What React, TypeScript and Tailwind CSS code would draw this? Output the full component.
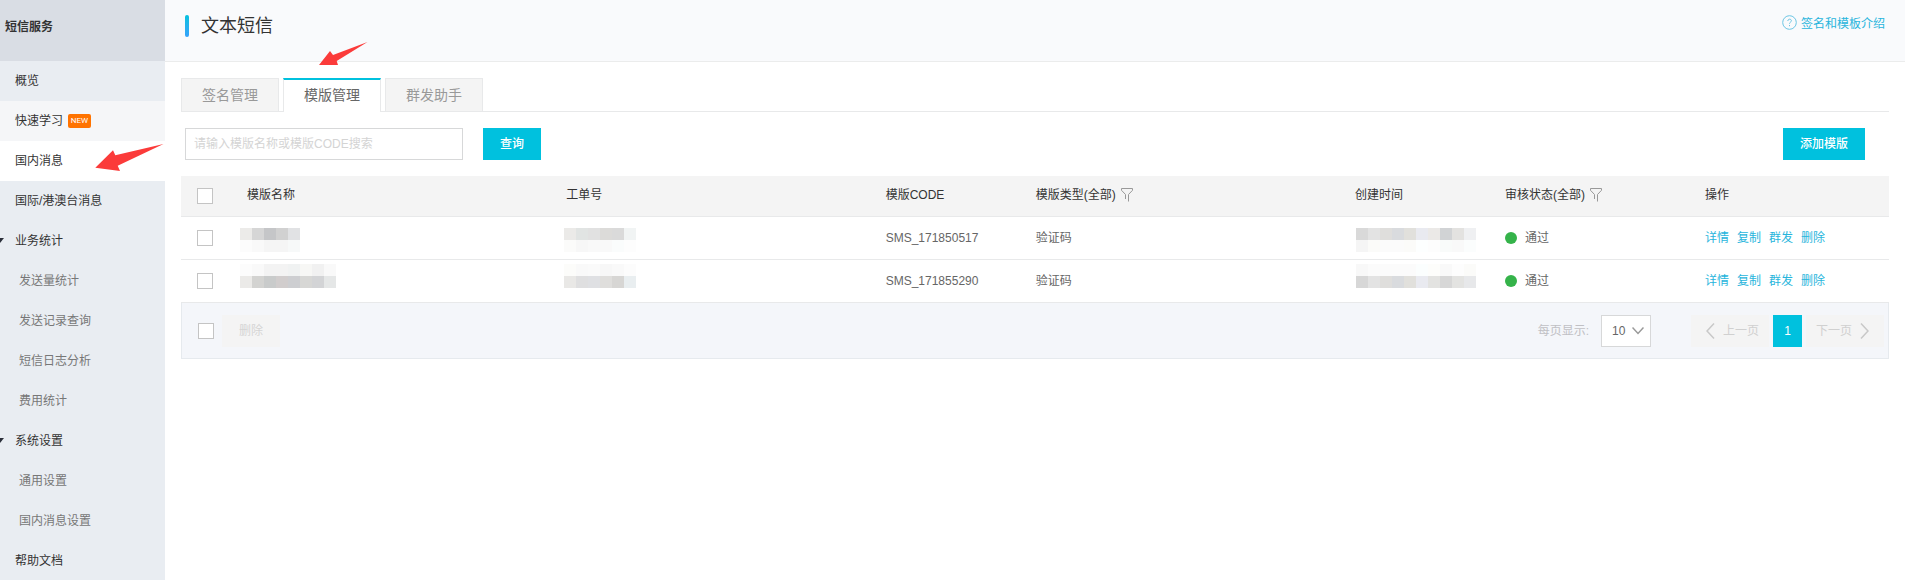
import React from "react";
import clsx from "clsx";

interface IMosaic {
  x: number;
  y: number;
  rows: string[][];
}

interface ITemplate {
  code: string;
  type: string;
  status: string;
  name: IMosaic;
  order: IMosaic;
  created: IMosaic;
}

const menu = [
  { label: "概览" },
  { label: "快速学习", badge: "NEW", hover: true },
  { label: "国内消息", active: true },
  { label: "国际/港澳台消息" },
  { label: "业务统计", group: true },
  { label: "发送量统计", sub: true },
  { label: "发送记录查询", sub: true },
  { label: "短信日志分析", sub: true },
  { label: "费用统计", sub: true },
  { label: "系统设置", group: true },
  { label: "通用设置", sub: true },
  { label: "国内消息设置", sub: true },
  { label: "帮助文档" },
];

const tabs = ["签名管理", "模版管理", "群发助手"];

const templates: ITemplate[] = [
  {
    code: "SMS_171850517",
    type: "验证码",
    status: "通过",
    name: {
      x: -7,
      y: 2,
      rows: [
        ["#ecebe9", "#d6d6d6", "#c5c6c8", "#d1d1d1", "#e1e2e4"],
        ["#fcfcfc", "#f9f9f9", "#f5f5f5", "#f5f5f5", "#f7f9f9"],
      ],
    },
    order: {
      x: -2,
      y: 2,
      rows: [
        ["#ebeae8", "#e1e4e3", "#e1e1e1", "#dcdbd9", "#dadada", "#f1f4f4"],
        ["#fbfbfa", "#f7f7f7", "#f9f9f9", "#f9f9f9", "#fafcfc", "#fdfdfd"],
      ],
    },
    created: {
      x: 1,
      y: 2,
      rows: [
        ["#d9d9d9", "#e3e3e3", "#dfdedc", "#d9dbde", "#e1e0dc", "#e9eaf0", "#ebe9e7", "#d1d3d5", "#e3e2e0", "#eff0f2"],
        ["#f5f5f5", "#fbfbf9", "#fbfbfb", "#fbfbfb", "#fbfbf9", "#fdffff", "#fdfdfd", "#f9fbfa", "#f9f9f9", "#fbfdfd"],
      ],
    },
  },
  {
    code: "SMS_171855290",
    type: "验证码",
    status: "通过",
    name: {
      x: -7,
      y: -5,
      rows: [
        ["#fcfcfc", "#f9f9f9", "#f3f3f3", "#f3f3f3", "#f0f2f2", "#f7f7f5", "#f1f1f1", "#f9f9f9"],
        ["#ebeae8", "#d3d3d1", "#c9cbcb", "#d1cdcd", "#cdced1", "#d7d7d5", "#d3d4d6", "#e5e7e7"],
      ],
    },
    order: {
      x: -2,
      y: -5,
      rows: [
        ["#fcfcfa", "#f9f9f9", "#fafafa", "#f7f7f7", "#f9f9f9", "#fcfcfc"],
        ["#e9e8e6", "#dfdfe0", "#dfe0e3", "#dfdedc", "#d7d6d4", "#e9eef0"],
      ],
    },
    created: {
      x: 1,
      y: -5,
      rows: [
        ["#f8f8f8", "#fbfbfb", "#fbfbfb", "#fbfbfb", "#fbfbfb", "#fbfefe", "#fdfdfb", "#f9f9f9", "#fdfdfd", "#fbfbf9"],
        ["#d7d7d7", "#e3e3e3", "#dfdedc", "#d9dbde", "#e1e0dc", "#e9eaf0", "#e3e3e1", "#d7d7d7", "#e3e3e1", "#e7e8ea"],
      ],
    },
  },
];

// masked value, drawn as 12px blocks
const Mosaic = ({ data }: { data: IMosaic }) => (
  <svg
    width="120"
    height="24"
    className="block overflow-visible"
    shapeRendering="crispEdges"
    aria-hidden="true"
  >
    {data.rows.map((row, r) =>
      row.map((fill, c) => (
        <rect
          key={`${r}-${c}`}
          x={data.x + c * 12}
          y={data.y + r * 12}
          width="12"
          height="12"
          fill={fill}
        />
      ))
    )}
  </svg>
);

const FilterIcon = () => (
  <svg width="12" height="14" viewBox="0 0 12 14" fill="none" stroke="#999" aria-hidden="true">
    <path d="M4.500 11V6.500L.5 2.300V.5h11v1.800L7.500 6.500V13.500" />
  </svg>
);

const Chevron = ({ d, stroke, w, h }: { d: string; stroke: string; w: number; h: number }) => (
  <svg width={w} height={h} fill="none" stroke={stroke} strokeWidth="1.5" aria-hidden="true">
    <path d={d} />
  </svg>
);

const Checkbox = ({ label }: { label: string }) => (
  <input
    type="checkbox"
    aria-label={label}
    className="block size-4 appearance-none border border-[#c4c4c4] bg-white checked:bg-[#00c1de]"
  />
);

const Sidebar = () => (
  <aside className="w-[165px] shrink-0 bg-[#e9edf2]">
    <div className="flex h-[61px] items-center bg-[#d9dde4] px-[5px] pb-2">
      <h2 className="text-xs font-bold text-[#333]">短信服务</h2>
    </div>
    <nav>
      {menu.map((item) => (
        <a
          key={item.label}
          href="#"
          className={clsx(
            "relative flex h-10 items-center gap-[5px] text-xs",
            item.sub ? "pl-[19px] text-[#777]" : "pl-[15px] text-[#333]",
            item.active && "bg-white",
            item.hover && "bg-[#f5f6f8]"
          )}
        >
          {item.group && (
            <svg className="absolute left-0 top-[17px]" width="4" height="5" aria-hidden="true">
              <path d="M0 0h4L0 5z" fill="#2b2f3a" />
            </svg>
          )}
          {item.label}
          {item.badge && (
            <span className="flex h-[14px] w-[23px] items-center justify-center rounded-[2px] bg-[#ff7300] font-[Roboto,sans-serif] text-[8px] text-white">
              {item.badge}
            </span>
          )}
        </a>
      ))}
    </nav>
  </aside>
);

const Header = () => (
  <header className="flex h-[62px] items-start justify-between border-b border-[#ebecec] bg-[#f9fafc] pl-5 pr-5 pt-[13px]">
    <div className="flex items-center gap-3">
      <span className="h-[22px] w-1 rounded-[2px] bg-linear-to-b from-[#00c1de] to-[#35a2fb]" />
      <h1 className="text-lg leading-[26px] text-[#333]">文本短信</h1>
    </div>
    <a href="#" className="flex items-start gap-1 pt-[2px] text-xs leading-[18px] text-[#28b5dc]">
      <svg width="15" height="15" viewBox="0 0 15 15" fill="none" stroke="#6cc5e4" aria-hidden="true">
        <circle cx="7.5" cy="7.5" r="6.8" />
        <path d="M5.800 6c0-2.400 3.600-2.400 3.600-.2 0 1.300-1.900 1.400-1.900 2.900M7.500 10v1.200" />
      </svg>
      签名和模板介绍
    </a>
  </header>
);

const TemplateTable = () => (
  <table className="w-full table-fixed border-separate border-spacing-0 text-left text-xs">
    <colgroup>
      <col className="w-[58px]" />
      <col />
      <col />
      <col className="w-[150px]" />
      <col />
      <col className="w-[150px]" />
      <col className="w-[200px]" />
      <col className="w-[192px]" />
    </colgroup>
    <thead>
      <tr className="h-[41px] bg-[#f4f4f4] text-[#333] [&>th]:border-b [&>th]:border-[#e8e9ea] [&>th]:font-normal [&>th]:px-2 [&>th]:pb-0.5">
        <th>
          <div className="pl-2 pt-0.5">
            <Checkbox label="全选" />
          </div>
        </th>
        <th>模版名称</th>
        <th>工单号</th>
        <th>模版CODE</th>
        <th>
          <span className="flex items-center gap-[5px]">
            模版类型(全部)
            <FilterIcon />
          </span>
        </th>
        <th>创建时间</th>
        <th>
          <span className="flex items-center gap-[5px]">
            审核状态(全部)
            <FilterIcon />
          </span>
        </th>
        <th>操作</th>
      </tr>
    </thead>
    <tbody>
      {templates.map((item) => (
        <tr
          key={item.code}
          className="h-[43px] text-[#666] [&>td]:border-b [&>td]:border-[#e8e9ea] [&>td]:px-2"
        >
          <td>
            <div className="pl-2">
              <Checkbox label={item.code} />
            </div>
          </td>
          <td>
            <Mosaic data={item.name} />
          </td>
          <td>
            <Mosaic data={item.order} />
          </td>
          <td>{item.code}</td>
          <td>{item.type}</td>
          <td>
            <Mosaic data={item.created} />
          </td>
          <td>
            <span className="flex items-center gap-2">
              <span className="size-3 rounded-full bg-[#35b34a]" />
              {item.status}
            </span>
          </td>
          <td>
            <span className="flex gap-2 text-[#28b5dc]">
              <a href="#">详情</a>
              <a href="#">复制</a>
              <a href="#">群发</a>
              <a href="#">删除</a>
            </span>
          </td>
        </tr>
      ))}
    </tbody>
  </table>
);

const TableFooter = () => (
  <div className="flex h-14 items-center border-x border-b border-[#e6eaee] bg-[#f4f6fa] pl-4 pr-1 text-xs">
    <Checkbox label="全选本页" />
    <button className="ml-2 h-8 w-[58px] bg-[#f4f4f4] text-[#d4d4d4]">删除</button>
    <label htmlFor="page-size" className="ml-auto text-[#c0c0c4]">
      每页显示:
    </label>
    <div className="relative ml-3 mr-10">
      <select
        id="page-size"
        className="block h-8 w-[50px] appearance-none border border-[#d7d8d9] bg-white pl-[10px] text-[#666]"
      >
        <option>10</option>
      </select>
      <span className="pointer-events-none absolute right-[7px] top-3">
        <Chevron w={12} h={8} stroke="#999" d="M.5 .5L6 6.500L11.500 .5" />
      </span>
    </div>
    <div className="flex items-center gap-1">
      <button className="flex h-8 w-[78px] items-center justify-end gap-2 bg-[#f4f4f4] pr-2.5 text-[#d0d0d0]">
        <Chevron w={9} h={16} stroke="#c8c8c8" d="M8 .5L1 8L8 15.500" />
        上一页
      </button>
      <button className="h-8 w-[29px] bg-[#00c1de] font-medium text-white">1</button>
      <button className="flex h-8 w-[78px] items-center justify-start gap-2 bg-[#f4f4f4] pl-2.5 text-[#d0d0d0]">
        下一页
        <Chevron w={9} h={16} stroke="#c8c8c8" d="M1 .5L8 8L1 15.500" />
      </button>
    </div>
  </div>
);

const App = () => {
  return (
    <div className="relative flex h-screen overflow-hidden bg-white font-['Liberation_Sans','Noto_Sans_CJK_SC',sans-serif]">
      <Sidebar />
      <main className="min-w-0 flex-1">
        <Header />
        <div className="px-4 pt-4">
          <div className="flex gap-1 border-b border-[#e8e9ea]">
            {tabs.map((tab, i) => (
              <button
                key={tab}
                className={clsx(
                  "-mb-px h-[34px] w-[98px] border-x border-[#e8e9ea] text-sm",
                  i === 1
                    ? "border-t-2 border-t-[#00c1de] bg-white pb-0.5 text-[#666]"
                    : "border-y bg-[#f4f4f4] text-[#999]"
                )}
              >
                {tab}
              </button>
            ))}
          </div>

          <div className="flex items-center gap-5 py-4 pl-1 pr-6">
            <input
              type="text"
              aria-label="搜索模版"
              placeholder="请输入模版名称或模版CODE搜索"
              className="h-8 w-[278px] border border-[#d7d8d9] px-2 text-xs outline-none placeholder:text-[#d4d4d4]"
            />
            <button className="h-8 w-[58px] bg-[#00c1de] text-xs font-medium text-white">
              查询
            </button>
            <button className="ml-auto h-8 w-[82px] bg-[#00c1de] text-xs font-medium text-white">
              添加模版
            </button>
          </div>

          <TemplateTable />
          <TableFooter />
        </div>
      </main>

      {/* pointers to the menu entry and the tab */}
      <svg className="pointer-events-none absolute left-0 top-0" width="380" height="180" fill="#fb3b3a" aria-hidden="true">
        <path d="M367.500 42L333 55L330 51L319 65H338L336.700 61z" />
        <path d="M163.500 144L115.300 155.300L113 150.300L95.300 167.700L120 171L117.700 165.700z" />
      </svg>
    </div>
  );
};

export default App;
